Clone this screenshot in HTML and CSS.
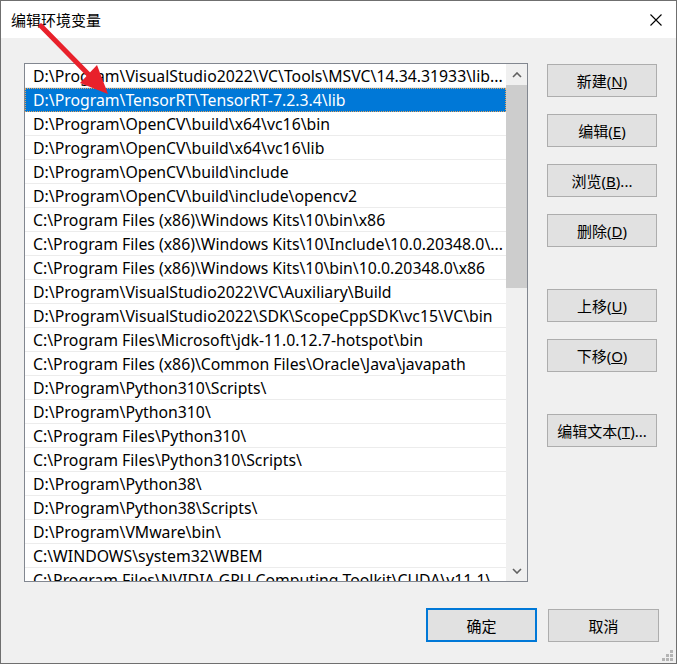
FILE: index.html
```html
<!DOCTYPE html>
<html lang="zh-CN">
  <head>
    <meta charset="UTF-8" />
    <meta name="viewport" content="width=device-width, initial-scale=1.0" />
    <link rel="stylesheet" href="styles.css">
  </head>
  <body>
    <div class="window">
      <div class="titlebar">
        <span class="title">编辑环境变量</span>
        <svg class="close" width="12" height="12" viewBox="0 0 12 12">
          <path d="M0.5 0.5 L11.5 11.5 M11.5 0.5 L0.5 11.5" stroke="#000" stroke-width="1.1" fill="none" />
        </svg>
      </div>

      <div class="content">
        <div class="list">
          <div class="rows">
            <div class="row">D:\Program\VisualStudio2022\VC\Tools\MSVC\14.34.31933\lib...</div>
            <div class="row selected">D:\Program\TensorRT\TensorRT-7.2.3.4\lib</div>
            <div class="row">D:\Program\OpenCV\build\x64\vc16\bin</div>
            <div class="row">D:\Program\OpenCV\build\x64\vc16\lib</div>
            <div class="row">D:\Program\OpenCV\build\include</div>
            <div class="row">D:\Program\OpenCV\build\include\opencv2</div>
            <div class="row">C:\Program Files (x86)\Windows Kits\10\bin\x86</div>
            <div class="row">C:\Program Files (x86)\Windows Kits\10\Include\10.0.20348.0\...</div>
            <div class="row">C:\Program Files (x86)\Windows Kits\10\bin\10.0.20348.0\x86</div>
            <div class="row">D:\Program\VisualStudio2022\VC\Auxiliary\Build</div>
            <div class="row">D:\Program\VisualStudio2022\SDK\ScopeCppSDK\vc15\VC\bin</div>
            <div class="row">C:\Program Files\Microsoft\jdk-11.0.12.7-hotspot\bin</div>
            <div class="row">C:\Program Files (x86)\Common Files\Oracle\Java\javapath</div>
            <div class="row">D:\Program\Python310\Scripts\</div>
            <div class="row">D:\Program\Python310\</div>
            <div class="row">C:\Program Files\Python310\</div>
            <div class="row">C:\Program Files\Python310\Scripts\</div>
            <div class="row">D:\Program\Python38\</div>
            <div class="row">D:\Program\Python38\Scripts\</div>
            <div class="row">D:\Program\VMware\bin\</div>
            <div class="row">C:\WINDOWS\system32\WBEM</div>
            <div class="row">C:\Program Files\NVIDIA GPU Computing Toolkit\CUDA\v11.1\...</div>
          </div>
          <div class="scrollbar">
            <div class="arrow">
              <svg width="10" height="6" viewBox="0 0 10 6"><path d="M1 5 L5 1 L9 5" stroke="#606060" stroke-width="1.6" fill="none" /></svg>
            </div>
            <div class="track">
              <div class="thumb"></div>
            </div>
            <div class="arrow">
              <svg width="10" height="6" viewBox="0 0 10 6"><path d="M1 1 L5 5 L9 1" stroke="#606060" stroke-width="1.6" fill="none" /></svg>
            </div>
          </div>
        </div>

        <div class="side">
          <div class="group">
            <button class="btn">新建(<u>N</u>)</button>
            <button class="btn">编辑(<u>E</u>)</button>
            <button class="btn">浏览(<u>B</u>)...</button>
            <button class="btn">删除(<u>D</u>)</button>
          </div>
          <div class="group">
            <button class="btn">上移(<u>U</u>)</button>
            <button class="btn">下移(<u>O</u>)</button>
          </div>
          <div class="group">
            <button class="btn">编辑文本(<u>T</u>)...</button>
          </div>
        </div>
      </div>

      <div class="footer">
        <button class="btn wide default">确定</button>
        <button class="btn wide">取消</button>
      </div>

      <svg class="grip" width="12" height="12" viewBox="0 0 12 12">
        <rect x="9" y="1" width="3" height="3" fill="#b4b4b4" />
        <rect x="5" y="5" width="3" height="3" fill="#b4b4b4" />
        <rect x="9" y="5" width="3" height="3" fill="#b4b4b4" />
        <rect x="1" y="9" width="3" height="3" fill="#b4b4b4" />
        <rect x="5" y="9" width="3" height="3" fill="#b4b4b4" />
        <rect x="9" y="9" width="3" height="3" fill="#b4b4b4" />
      </svg>

      <svg class="annotation" width="130" height="110" viewBox="0 0 130 110">
        <line x1="40" y1="25" x2="92" y2="78" stroke="#e8212b" stroke-width="5" stroke-linecap="round" />
        <polygon points="107,93 96,64 79,82" fill="#e8212b" />
      </svg>
    </div>
  </body>
</html>
```

FILE: styles.css
```css
body {
  margin: 0;
  font-family: "Noto Sans", "Noto Sans CJK SC", sans-serif;
  font-size: 15px;
}

.window {
  position: relative;
  display: flex;
  flex-direction: column;
  width: 677px;
  height: 664px;
  box-sizing: border-box;
  border: 1px solid #6f6f6f;
  background: #f0f0f0;
  overflow: hidden;
}

.titlebar {
  display: flex;
  align-items: center;
  justify-content: space-between;
  height: 37px;
  padding: 0 14px 0 10px;
  background: #fff;
}

.title {
  color: #000;
}

.content {
  display: flex;
  gap: 19px;
  padding: 25px 0 0 23px;
}

.list {
  display: flex;
  width: 504px;
  height: 519px;
  box-sizing: border-box;
  border: 1px solid #828790;
  background: #fff;
}

.rows {
  flex: 1;
  overflow: hidden;
}

.row {
  height: 24px;
  box-sizing: border-box;
  padding: 3px 0 0 8px;
  font-size: 15.8px;
  line-height: 19px;
  border-bottom: 1px solid #ececec;
  white-space: nowrap;
  overflow: hidden;
  color: #000;
}

.row.selected {
  background: #0078d7;
  color: #fff;
  border-bottom-color: #0078d7;
  outline: 1px dotted #e8a65c;
  outline-offset: -1px;
}

.scrollbar {
  display: flex;
  flex-direction: column;
  width: 21px;
  background: #f0f0f0;
}

.arrow {
  display: flex;
  align-items: center;
  justify-content: center;
  height: 21px;
}

.track {
  flex: 1;
}

.thumb {
  height: 203px;
  background: #cdcdcd;
}

.side {
  display: flex;
  flex-direction: column;
  gap: 42px;
  padding-top: 1px;
}

.group {
  display: flex;
  flex-direction: column;
  gap: 17px;
}

.btn {
  width: 110px;
  height: 33px;
  box-sizing: border-box;
  border: 1px solid #adadad;
  background: #e1e1e1;
  font-family: inherit;
  font-size: 15px;
  color: #000;
  padding: 0;
}

.footer {
  display: flex;
  justify-content: flex-end;
  align-items: center;
  gap: 11px;
  padding: 26px 17px 0 0;
}

.btn.wide {
  width: 111px;
}

.btn.default {
  height: 34px;
  border: 2px solid #0078d7;
}

.grip {
  position: absolute;
  right: 3px;
  bottom: 2px;
}

.annotation {
  position: absolute;
  left: 0;
  top: 0;
  pointer-events: none;
}
```
